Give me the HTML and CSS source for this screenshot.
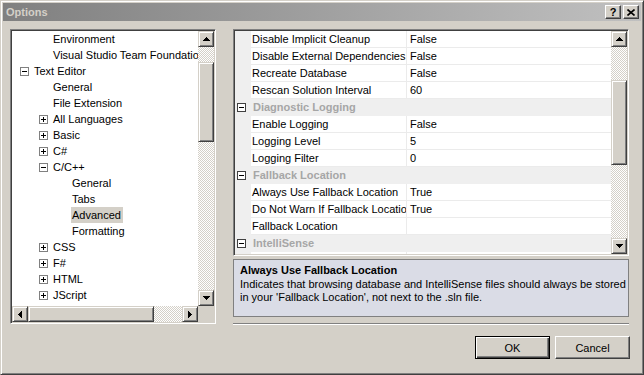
FILE: index.html
```html
<!DOCTYPE html>
<html lang="en">
<head>
    <meta charset="UTF-8">
    <title>Options</title>
    <link rel="stylesheet" href="styles.css">
</head>
<body>
    <div class="window">
        <div class="titlebar">
            <span class="title">Options</span>
            <div class="caption-btns">
                <span class="cap-btn">?</span>
                <span class="cap-btn">
                    <svg width="8" height="7"><path d="M0.5 0.5l7 6M7.5 0.5l-7 6" stroke="#000" stroke-width="1.6"/></svg>
                </span>
            </div>
        </div>

        <div class="main">
            <!-- options tree -->
            <div class="tree sunken">
                <div class="tree-view">
                    <div class="row lvl1"><span class="exp"></span><span class="label">Environment</span></div>
                    <div class="row lvl1"><span class="exp"></span><span class="label">Visual Studio Team Foundation Server</span></div>
                    <div class="row lvl0"><svg class="exp" width="9" height="9"><rect x="0.5" y="0.5" width="8" height="8" fill="#fff" stroke="#808080"/><path d="M2 4.5h5" stroke="#000"/></svg><span class="label">Text Editor</span></div>
                    <div class="row lvl1"><span class="exp"></span><span class="label">General</span></div>
                    <div class="row lvl1"><span class="exp"></span><span class="label">File Extension</span></div>
                    <div class="row lvl1"><svg class="exp" width="9" height="9"><rect x="0.5" y="0.5" width="8" height="8" fill="#fff" stroke="#808080"/><path d="M2 4.5h5M4.5 2v5" stroke="#000"/></svg><span class="label">All Languages</span></div>
                    <div class="row lvl1"><svg class="exp" width="9" height="9"><rect x="0.5" y="0.5" width="8" height="8" fill="#fff" stroke="#808080"/><path d="M2 4.5h5M4.5 2v5" stroke="#000"/></svg><span class="label">Basic</span></div>
                    <div class="row lvl1"><svg class="exp" width="9" height="9"><rect x="0.5" y="0.5" width="8" height="8" fill="#fff" stroke="#808080"/><path d="M2 4.5h5M4.5 2v5" stroke="#000"/></svg><span class="label">C#</span></div>
                    <div class="row lvl1"><svg class="exp" width="9" height="9"><rect x="0.5" y="0.5" width="8" height="8" fill="#fff" stroke="#808080"/><path d="M2 4.5h5" stroke="#000"/></svg><span class="label">C/C++</span></div>
                    <div class="row lvl2"><span class="exp"></span><span class="label">General</span></div>
                    <div class="row lvl2"><span class="exp"></span><span class="label">Tabs</span></div>
                    <div class="row lvl2"><span class="exp"></span><span class="label selected">Advanced</span></div>
                    <div class="row lvl2"><span class="exp"></span><span class="label">Formatting</span></div>
                    <div class="row lvl1"><svg class="exp" width="9" height="9"><rect x="0.5" y="0.5" width="8" height="8" fill="#fff" stroke="#808080"/><path d="M2 4.5h5M4.5 2v5" stroke="#000"/></svg><span class="label">CSS</span></div>
                    <div class="row lvl1"><svg class="exp" width="9" height="9"><rect x="0.5" y="0.5" width="8" height="8" fill="#fff" stroke="#808080"/><path d="M2 4.5h5M4.5 2v5" stroke="#000"/></svg><span class="label">F#</span></div>
                    <div class="row lvl1"><svg class="exp" width="9" height="9"><rect x="0.5" y="0.5" width="8" height="8" fill="#fff" stroke="#808080"/><path d="M2 4.5h5M4.5 2v5" stroke="#000"/></svg><span class="label">HTML</span></div>
                    <div class="row lvl1"><svg class="exp" width="9" height="9"><rect x="0.5" y="0.5" width="8" height="8" fill="#fff" stroke="#808080"/><path d="M2 4.5h5M4.5 2v5" stroke="#000"/></svg><span class="label">JScript</span></div>
                    <div class="row lvl1"><svg class="exp" width="9" height="9"><rect x="0.5" y="0.5" width="8" height="8" fill="#fff" stroke="#808080"/><path d="M2 4.5h5M4.5 2v5" stroke="#000"/></svg><span class="label">Plain Text</span></div>
                </div>
                <div class="vscroll">
                    <div class="sbtn"><svg width="7" height="4"><path d="M3 0h1v1h1v1h1v1h1v1H0V3h1V2h1V1h1z"/></svg></div>
                    <div class="track tree-track-top"></div>
                    <div class="thumb tree-vthumb"></div>
                    <div class="track fill"></div>
                    <div class="sbtn"><svg width="7" height="4"><path d="M0 0h7v1h-1v1h-1v1h-1v1h-1v-1h-1v-1h-1v-1h-1z"/></svg></div>
                </div>
                <div class="hscroll">
                    <div class="sbtn"><svg width="4" height="7"><path d="M4 0v7h-1v-1h-1v-1h-1v-1h-1v-1h1v-1h1v-1h1v-1z"/></svg></div>
                    <div class="thumb tree-hthumb"></div>
                    <div class="track fill"></div>
                    <div class="sbtn"><svg width="4" height="7"><path d="M0 0h1v1h1v1h1v1h1v1h-1v1h-1v1h-1v1h-1z"/></svg></div>
                </div>
                <div class="corner"></div>
            </div>

            <div class="right">
                <!-- property grid -->
                <div class="grid sunken">
                    <div class="props">
                        <div class="prop"><span class="gutter"></span><span class="name">Disable Implicit Cleanup</span><span class="value">False</span></div>
                        <div class="prop"><span class="gutter"></span><span class="name">Disable External Dependencies Folders</span><span class="value">False</span></div>
                        <div class="prop"><span class="gutter"></span><span class="name">Recreate Database</span><span class="value">False</span></div>
                        <div class="prop"><span class="gutter"></span><span class="name">Rescan Solution Interval</span><span class="value">60</span></div>
                        <div class="cat"><svg class="exp" width="9" height="9"><rect x="0.5" y="0.5" width="8" height="8" fill="#fff" stroke="#404040"/><path d="M2 4.5h5" stroke="#000"/></svg>Diagnostic Logging</div>
                        <div class="prop"><span class="gutter"></span><span class="name">Enable Logging</span><span class="value">False</span></div>
                        <div class="prop"><span class="gutter"></span><span class="name">Logging Level</span><span class="value">5</span></div>
                        <div class="prop"><span class="gutter"></span><span class="name">Logging Filter</span><span class="value">0</span></div>
                        <div class="cat"><svg class="exp" width="9" height="9"><rect x="0.5" y="0.5" width="8" height="8" fill="#fff" stroke="#404040"/><path d="M2 4.5h5" stroke="#000"/></svg>Fallback Location</div>
                        <div class="prop"><span class="gutter"></span><span class="name">Always Use Fallback Location</span><span class="value">True</span></div>
                        <div class="prop"><span class="gutter"></span><span class="name">Do Not Warn If Fallback Location Used</span><span class="value">True</span></div>
                        <div class="prop"><span class="gutter"></span><span class="name">Fallback Location</span><span class="value"></span></div>
                        <div class="cat"><svg class="exp" width="9" height="9"><rect x="0.5" y="0.5" width="8" height="8" fill="#fff" stroke="#404040"/><path d="M2 4.5h5" stroke="#000"/></svg>IntelliSense</div>
                        <div class="prop"><span class="gutter"></span><span class="name">Auto Quick Info</span><span class="value">True</span></div>
                    </div>
                    <div class="vscroll">
                        <div class="sbtn"><svg width="7" height="4"><path d="M3 0h1v1h1v1h1v1h1v1H0V3h1V2h1V1h1z"/></svg></div>
                        <div class="track grid-track-top"></div>
                        <div class="thumb grid-vthumb"></div>
                        <div class="track fill"></div>
                        <div class="sbtn"><svg width="7" height="4"><path d="M0 0h7v1h-1v1h-1v1h-1v1h-1v-1h-1v-1h-1v-1h-1z"/></svg></div>
                    </div>
                </div>

                <!-- description -->
                <div class="desc">
                    <div class="desc-title">Always Use Fallback Location</div>
                    <div class="desc-text">Indicates that browsing database and IntelliSense files should always be stored<br>in your 'Fallback Location', not next to the .sln file.</div>
                </div>
                <div class="sep"></div>
            </div>
        </div>

        <div class="buttons">
            <button class="btn default">OK</button>
            <button class="btn">Cancel</button>
        </div>
    </div>
</body>
</html>
```

FILE: styles.css
```css
* {
    box-sizing: border-box;
}

body {
    margin: 0;
    font-family: "Liberation Sans", Arial, sans-serif;
    font-size: 11px;
    color: #000;
    background: #d4d0c8;
}

.window {
    width: 644px;
    height: 375px;
    padding: 2px;
    background: #d4d0c8;
    border: 1px solid;
    border-color: #d4d0c8 #404040 #404040 #d4d0c8;
    box-shadow: inset 1px 1px #fff, inset -1px -1px #808080;
    overflow: hidden;
}

/* title bar */
.titlebar {
    height: 18px;
    display: flex;
    align-items: center;
    justify-content: space-between;
    padding: 0 2px 0 3px;
    background: linear-gradient(to right, #808080, #c0c0c0);
}

.title {
    font-weight: bold;
    color: #d4d0c8;
}

.caption-btns {
    display: flex;
    gap: 2px;
}

.cap-btn {
    width: 16px;
    height: 14px;
    display: flex;
    align-items: center;
    justify-content: center;
    font-weight: bold;
    line-height: 1;
    background: #d4d0c8;
    border: 1px solid;
    border-color: #fff #404040 #404040 #fff;
    box-shadow: inset -1px -1px #808080;
}

.main {
    display: flex;
    gap: 17px;
    padding: 8px 0 0 7px;
}

.sunken {
    padding: 1px;
    border: 1px solid;
    border-color: #808080 #fff #fff #808080;
    box-shadow: inset 1px 1px #404040, inset -1px -1px #d4d0c8;
}

/* tree */
.tree {
    width: 206px;
    height: 295px;
    display: grid;
    grid-template-columns: 1fr 16px;
    grid-template-rows: 1fr 16px;
    background: #fff;
}

.tree-view {
    overflow: hidden;
    min-width: 0;
    min-height: 0;
}

.row {
    display: flex;
    align-items: center;
    height: 16px;
    white-space: nowrap;
}

.lvl0 { padding-left: 8px; }
.lvl1 { padding-left: 27px; }
.lvl2 { padding-left: 46px; }

.exp {
    flex: none;
    width: 9px;
    height: 9px;
    margin-right: 4px;
}

.label {
    padding: 0 2px 0 1px;
    line-height: 16px;
}

.selected {
    background: #d4d0c8;
}

/* scrollbars */
.vscroll {
    display: flex;
    flex-direction: column;
}

.hscroll {
    display: flex;
}

.sbtn, .thumb {
    flex: none;
    background: #d4d0c8;
    border: 1px solid;
    border-color: #d4d0c8 #404040 #404040 #d4d0c8;
    box-shadow: inset 1px 1px #fff, inset -1px -1px #808080;
}

.sbtn {
    width: 16px;
    height: 16px;
    display: flex;
    align-items: center;
    justify-content: center;
}

.sbtn svg {
    display: block;
}

.track {
    flex: none;
    background: repeating-conic-gradient(#fff 0 25%, #d4d0c8 0 50%) 0 0 / 2px 2px;
}

.track.fill {
    flex: 1;
}

.tree-track-top { height: 15px; }
.tree-vthumb { height: 80px; }
.tree-hthumb { width: 126px; }

.corner {
    background: #d4d0c8;
}

.right {
    width: 396px;
    display: flex;
    flex-direction: column;
}

/* property grid */
.grid {
    height: 227px;
    display: grid;
    grid-template-columns: 1fr 16px;
    background: #fff;
}

.props {
    overflow: hidden;
    min-width: 0;
}

.prop {
    display: flex;
    height: 17px;
    white-space: nowrap;
}

.gutter {
    width: 16px;
    flex: none;
    background: #efefef;
}

.name, .value {
    line-height: 16px;
    border-bottom: 1px solid #ebebeb;
    overflow: hidden;
}

.name {
    width: 155px;
    flex: none;
    padding-left: 1px;
}

.value {
    flex: 1;
    padding-left: 3px;
    border-left: 1px solid #ebebeb;
}

.cat {
    display: flex;
    align-items: center;
    height: 18px;
    margin-top: -1px;
    padding-left: 2px;
    border-top: 1px solid #d4d0c8;
    border-bottom: 1px solid #efefef;
    background: #efefef;
    font-weight: bold;
    color: #a6a6a6;
}

.cat .exp {
    margin-right: 7px;
}

.grid-track-top { height: 33px; }
.grid-vthumb { height: 85px; }

/* description */
.desc {
    height: 58px;
    margin-top: 3px;
    padding: 3px 6px 0;
    border: 1px solid #808080;
    background: #dadce6;
    white-space: nowrap;
}

.desc-title {
    font-weight: bold;
    line-height: 14px;
}

.desc-text {
    margin-top: 1px;
    line-height: 13px;
}

.sep {
    height: 2px;
    margin-top: 6px;
    border-top: 1px solid #808080;
    border-bottom: 1px solid #fff;
}

/* dialog buttons */
.buttons {
    display: flex;
    justify-content: flex-end;
    gap: 5px;
    margin-top: 11px;
    padding-right: 11px;
}

.btn {
    width: 75px;
    height: 23px;
    padding: 0;
    font: inherit;
    color: #000;
    background: #d4d0c8;
    border: 1px solid;
    border-color: #fff #404040 #404040 #fff;
    box-shadow: inset -1px -1px #808080;
}

.btn.default {
    border-color: #000;
    box-shadow: inset 1px 1px #fff, inset -1px -1px #404040, inset -2px -2px #808080;
}
```
